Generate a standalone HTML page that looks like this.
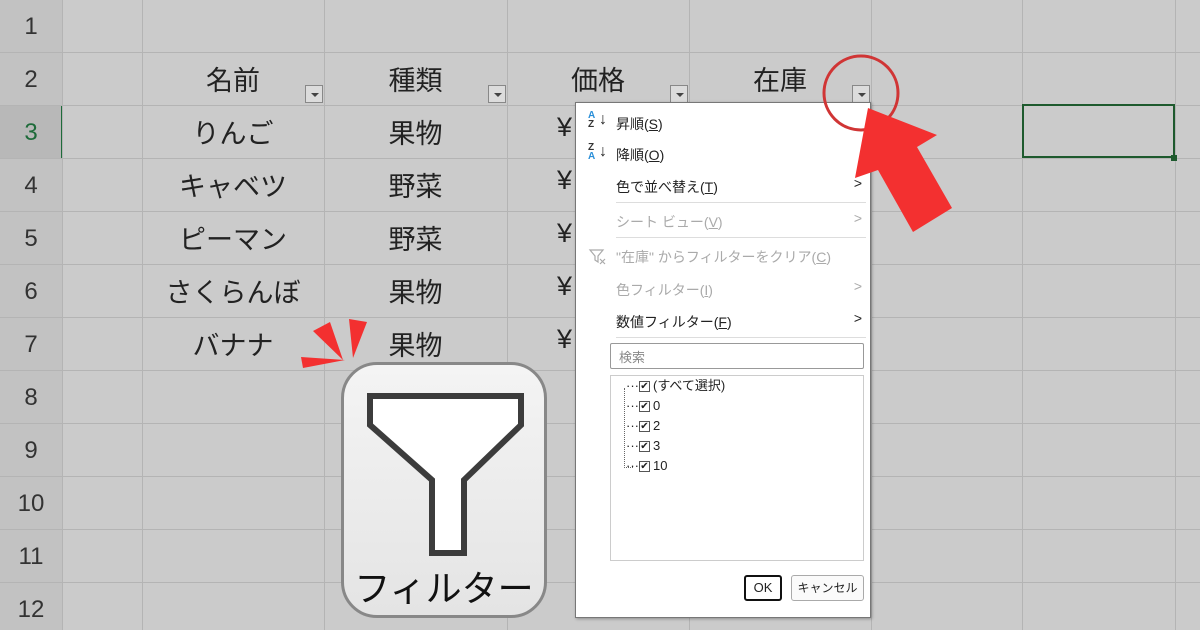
<!DOCTYPE html>
<html><head><meta charset="utf-8"><style>
*{margin:0;padding:0;box-sizing:border-box}
body{width:1200px;height:630px;overflow:hidden;background:#cbcbcb;position:relative;font-family:"Liberation Sans","Noto Sans CJK JP",sans-serif;color:#222}
.a{position:absolute}
.vl{position:absolute;top:0;height:630px;width:1px;background:#b4b4b4}
.hl{position:absolute;left:0;width:1200px;height:1px;background:#b4b4b4}
.rn{position:absolute;left:0;width:62px;text-align:center;font-size:24px;color:#333}
.ct{position:absolute;font-size:27px;text-align:center;color:#222}
.dd{position:absolute;width:18px;height:18px;border:1px solid #888;background:#dcdcdc}
.dd:after{content:"";position:absolute;left:5px;top:7px;border-left:4px solid transparent;border-right:4px solid transparent;border-top:4px solid #444}
.mi{position:absolute;left:40px;font-size:14px;color:#222}
.dis{color:#aaa}
.arr{position:absolute;right:8px;font-size:14px}
.sep{position:absolute;left:40px;right:4px;height:1px;background:#ddd}
.cb{display:inline-block;width:11px;height:11px;border:1px solid #555;font-size:10px;line-height:9px;text-align:center;vertical-align:middle;margin-right:3px}
</style></head><body>
<div class="a" style="left:0;top:0;width:62px;height:630px;background:#c2c2c2"></div>
<div class="a" style="left:0;top:105px;width:62px;height:53px;background:#b8b8b8"></div>
<div class="a" style="left:61px;top:105px;width:2px;height:53px;background:#1e6b3a"></div>
<div class="vl" style="left:62px"></div><div class="vl" style="left:142px"></div><div class="vl" style="left:324px"></div><div class="vl" style="left:507px"></div><div class="vl" style="left:689px"></div><div class="vl" style="left:871px"></div><div class="vl" style="left:1022px"></div><div class="vl" style="left:1175px"></div>
<div class="hl" style="top:52px"></div><div class="hl" style="top:105px"></div><div class="hl" style="top:158px"></div><div class="hl" style="top:211px"></div><div class="hl" style="top:264px"></div><div class="hl" style="top:317px"></div><div class="hl" style="top:370px"></div><div class="hl" style="top:423px"></div><div class="hl" style="top:476px"></div><div class="hl" style="top:529px"></div><div class="hl" style="top:582px"></div>
<div class="rn" style="top:13px">1</div><div class="rn" style="top:66px">2</div><div class="rn" style="top:119px;color:#1e6b3a">3</div><div class="rn" style="top:172px">4</div><div class="rn" style="top:225px">5</div><div class="rn" style="top:278px">6</div><div class="rn" style="top:331px">7</div><div class="rn" style="top:384px">8</div><div class="rn" style="top:437px">9</div><div class="rn" style="top:490px">10</div><div class="rn" style="top:543px">11</div><div class="rn" style="top:596px">12</div>
<div class="ct" style="left:142px;width:182px;top:59px">名前</div>
<div class="ct" style="left:324px;width:183px;top:59px">種類</div>
<div class="ct" style="left:507px;width:182px;top:59px">価格</div>
<div class="ct" style="left:689px;width:182px;top:59px">在庫</div>
<div class="dd" style="left:305px;top:85px"></div><div class="dd" style="left:488px;top:85px"></div><div class="dd" style="left:670px;top:85px"></div><div class="dd" style="left:852px;top:85px"></div>
<div class="ct" style="left:142px;width:182px;top:112px">りんご</div><div class="ct" style="left:324px;width:183px;top:112px">果物</div>
<div class="ct" style="left:142px;width:182px;top:165px">キャベツ</div><div class="ct" style="left:324px;width:183px;top:165px">野菜</div>
<div class="ct" style="left:142px;width:182px;top:218px">ピーマン</div><div class="ct" style="left:324px;width:183px;top:218px">野菜</div>
<div class="ct" style="left:142px;width:182px;top:271px">さくらんぼ</div><div class="ct" style="left:324px;width:183px;top:271px">果物</div>
<div class="ct" style="left:142px;width:182px;top:324px">バナナ</div><div class="ct" style="left:324px;width:183px;top:324px">果物</div>
<div class="ct" style="left:557px;top:112px">¥</div><div class="ct" style="left:557px;top:165px">¥</div><div class="ct" style="left:557px;top:218px">¥</div><div class="ct" style="left:557px;top:271px">¥</div><div class="ct" style="left:557px;top:324px">¥</div>
<div class="a" style="left:1022px;top:104px;width:153px;height:54px;border:2px solid #1e5a2e"></div>
<div class="a" style="left:1171px;top:155px;width:6px;height:6px;background:#1e5a2e"></div>

<div class="a" style="left:575px;top:102px;width:296px;height:516px;background:#fff;border:1px solid #777;box-shadow:1px 1px 3px rgba(0,0,0,.3)">
 <div class="a" style="left:12px;top:8px;font-size:10px;line-height:9px;color:#2a8fd8;font-weight:bold">A<br><span style="color:#333">Z</span></div><div class="a" style="left:23px;top:8px;font-size:16px">↓</div>
 <div class="mi" style="top:11px">昇順(<u>S</u>)</div>
 <div class="a" style="left:12px;top:40px;font-size:10px;line-height:9px;color:#333;font-weight:bold">Z<br><span style="color:#2a8fd8">A</span></div><div class="a" style="left:23px;top:40px;font-size:16px">↓</div>
 <div class="mi" style="top:42px">降順(<u>O</u>)</div>
 <div class="mi" style="top:74px">色で並べ替え(<u>T</u>)</div><div class="arr" style="top:72px">&gt;</div>
 <div class="sep" style="top:99px"></div>
 <div class="mi dis" style="top:109px">シート ビュー(<u>V</u>)</div><div class="arr dis" style="top:107px">&gt;</div>
 <div class="sep" style="top:134px"></div>
 <svg class="a" style="left:12px;top:144px" width="20" height="20"><path d="M2 3H15L10 9V15L7 13V9Z" fill="none" stroke="#aaa" stroke-width="1.2"/><path d="M12 12L17 17M17 12L12 17" stroke="#aaa" stroke-width="1.2"/></svg>
 <div class="mi dis" style="top:144px">"在庫" からフィルターをクリア(<u>C</u>)</div>
 <div class="mi dis" style="top:177px">色フィルター(<u>I</u>)</div><div class="arr dis" style="top:175px">&gt;</div>
 <div class="mi" style="top:209px">数値フィルター(<u>F</u>)</div><div class="arr" style="top:207px">&gt;</div>
 <div class="sep" style="top:234px"></div>
 <div class="a" style="left:34px;top:240px;width:254px;height:26px;border:1px solid #999;border-radius:2px;font-size:13px;color:#888;padding:3px 8px">検索</div>
 <div class="a" style="left:34px;top:272px;width:254px;height:186px;border:1px solid #ccc"></div>
 <div class="a" style="left:48px;top:285px;width:9px;height:80px;border-left:1px dotted #666;border-bottom:1px dotted #666"></div>
 <div class="a" style="left:50px;top:273px;font-size:13px;line-height:20px">
  <div>···<span class="cb">✔</span>(すべて選択)</div><div>···<span class="cb">✔</span>0</div><div>···<span class="cb">✔</span>2</div><div>···<span class="cb">✔</span>3</div><div>···<span class="cb">✔</span>10</div>
 </div>
 <div class="a" style="left:168px;top:472px;width:38px;height:26px;border:2px solid #111;border-radius:3px;font-size:13px;text-align:center;line-height:22px">OK</div>
 <div class="a" style="left:215px;top:472px;width:73px;height:26px;border:1px solid #aaa;border-radius:3px;font-size:12px;text-align:center;line-height:24px;background:#fafafa">キャンセル</div>
</div>

<svg class="a" style="left:0;top:0" width="1200" height="630">
 <circle cx="861" cy="93" r="37" fill="none" stroke="#d03535" stroke-width="3"/>
 <polygon points="868,108 937,135 917,147 952,208 913,232 878,170 855,178" fill="#f33030"/>
 <polygon points="301,357 303,368 345,360" fill="#f33030"/>
 <polygon points="313,331 330,322 343,360" fill="#f33030"/>
 <polygon points="349,319 367,322 353,358" fill="#f33030"/>
</svg>

<div class="a" style="left:341px;top:362px;width:206px;height:256px;border:3px solid #888;border-radius:36px;background:linear-gradient(#f4f4f4,#e4e4e4)"></div>
<svg class="a" style="left:341px;top:362px" width="206" height="256"><path d="M29 34H180V63L123 118V191H91V118L29 63Z" fill="#ffffff" stroke="#3c3c3c" stroke-width="6"/></svg>
<div class="a" style="left:341px;top:560px;width:206px;text-align:center;font-size:36px;color:#111">フィルター</div>
</body></html>
